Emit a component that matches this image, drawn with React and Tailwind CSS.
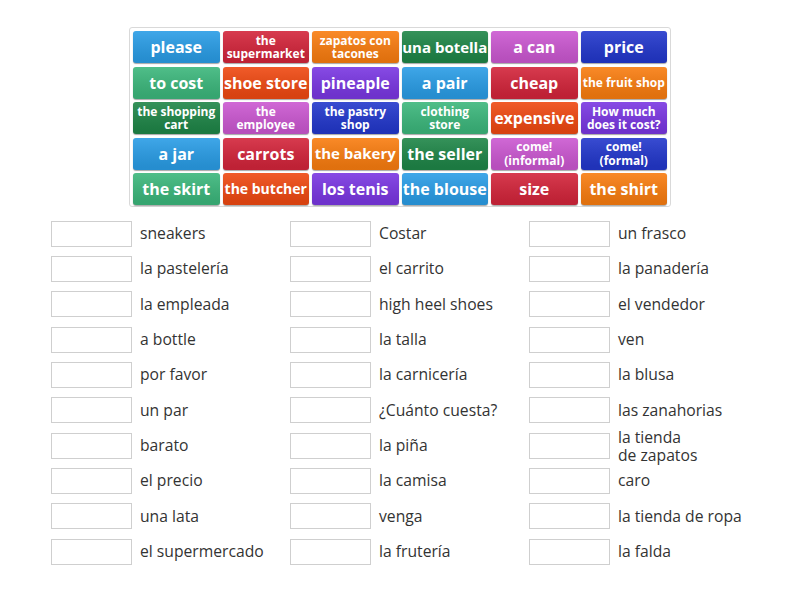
import React from "react";

const COLORS = [
  "bg-[#2a9de6]",
  "bg-[#d3253b]",
  "bg-[#f97d10]",
  "bg-[#1f8648]",
  "bg-[#cb58d1]",
  "bg-[#2338cc]",
  "bg-[#3cb77c]",
  "bg-[#ef4912]",
  "bg-[#7a37e2]",
];

const TILES = [
  ["please", "text-[16px]"],
  [["the", "supermarket"], "text-[12px]"],
  [["zapatos con", "tacones"], "text-[12px]"],
  ["una botella", "text-[15px]"],
  ["a can", "text-[16px]"],
  ["price", "text-[16px]"],
  ["to cost", "text-[16px]"],
  ["shoe store", "text-[16px]"],
  ["pineaple", "text-[16px]"],
  ["a pair", "text-[16px]"],
  ["cheap", "text-[16px]"],
  ["the fruit shop", "text-[12px]"],
  [["the shopping", "cart"], "text-[12px]"],
  [["the", "employee"], "text-[12px]"],
  [["the pastry", "shop"], "text-[12px]"],
  [["clothing", "store"], "text-[12px]"],
  ["expensive", "text-[16px]"],
  [["How much", "does it cost?"], "text-[12px]"],
  ["a jar", "text-[16px]"],
  ["carrots", "text-[16px]"],
  ["the bakery", "text-[15px]"],
  ["the seller", "text-[16px]"],
  [["come!", "(informal)"], "text-[12px]"],
  [["come!", "(formal)"], "text-[12px]"],
  ["the skirt", "text-[16px]"],
  ["the butcher", "text-[14px]"],
  ["los tenis", "text-[16px]"],
  ["the blouse", "text-[16px]"],
  ["size", "text-[16px]"],
  ["the shirt", "text-[16px]"],
];

const COLS = [
  ["sneakers", "la pastelería", "la empleada", "a bottle", "por favor", "un par", "barato", "el precio", "una lata", "el supermercado"],
  ["Costar", "el carrito", "high heel shoes", "la talla", "la carnicería", "¿Cuánto cuesta?", "la piña", "la camisa", "venga", "la frutería"],
  ["un frasco", "la panadería", "el vendedor", "ven", "la blusa", "las zanahorias", ["la tienda", "de zapatos"], "caro", "la tienda de ropa", "la falda"],
];

function Tile({ label, size, color }) {
  const two = Array.isArray(label);
  return (
    <div
      className={`${color} bg-linear-to-b from-white/10 to-black/10 rounded-[3px] shadow-[0_1px_1px_rgba(0,0,0,0.35)] h-[32px] flex items-center justify-center text-center text-white font-bold whitespace-nowrap overflow-hidden ${size}`}
    >
      {two ? (
        <div className="leading-[13.5px]">
          <div>{label[0]}</div>
          <div>{label[1]}</div>
        </div>
      ) : (
        <span className="leading-none">{label}</span>
      )}
    </div>
  );
}

export default function App() {
  return (
    <div
      className="w-[800px] h-[600px] bg-white overflow-hidden"
      style={{ fontFamily: '"Open Sans", "Noto Sans", sans-serif' }}
    >
      <div className="pt-[27px] flex justify-center">
        <div className="w-[542px] border border-[#d9d9d9] rounded-[3px] px-[3px] pt-[3px] pb-px bg-white">
          <div className="grid grid-cols-6 gap-x-[3px] gap-y-[3.5px]">
            {TILES.map(([label, size], i) => (
              <Tile key={i} label={label} size={size} color={COLORS[i % 9]} />
            ))}
          </div>
        </div>
      </div>
      <div className="pl-[51px] pt-[9px] grid grid-cols-[239px_239px_239px]">
        {COLS.map((col, ci) => (
          <div key={ci} className="flex flex-col">
            {col.map((t, ri) => (
              <div key={ri} className="h-[35.33px] flex items-center">
                <div className="w-[81px] h-[26px] border border-[#cfcfcf] bg-white shrink-0" />
                <div className="pl-[8px] text-[15.7px] text-[#333333] whitespace-nowrap">
                  {Array.isArray(t) ? (
                    <div className="leading-[18px]">
                      <div>{t[0]}</div>
                      <div>{t[1]}</div>
                    </div>
                  ) : (
                    <span className="leading-[20px]">{t}</span>
                  )}
                </div>
              </div>
            ))}
          </div>
        ))}
      </div>
    </div>
  );
}
